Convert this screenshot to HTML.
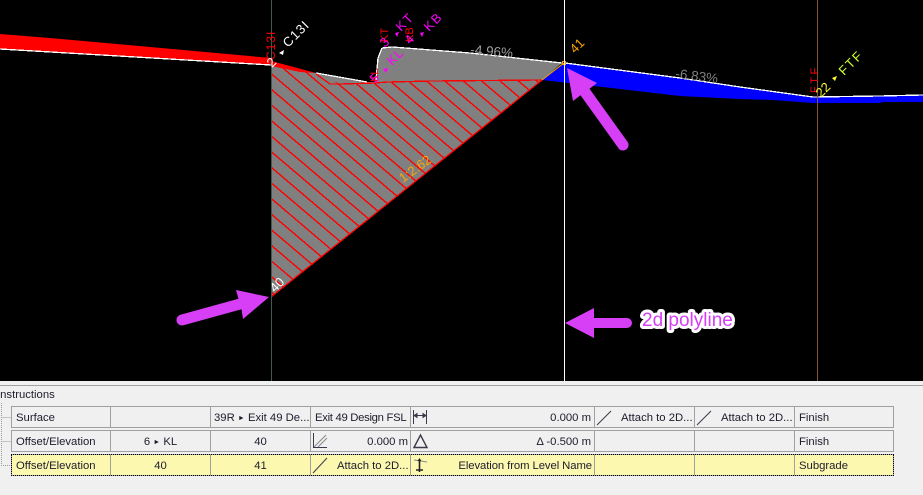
<!DOCTYPE html>
<html>
<head>
<meta charset="utf-8">
<style>
html,body{margin:0;padding:0;background:#000;width:923px;height:495px;overflow:hidden;}
#w{position:relative;width:923px;height:495px;overflow:hidden;background:#000;font-family:"Liberation Sans",sans-serif;}
#cad{position:absolute;left:0;top:0;}
#panel{position:absolute;left:0;top:381px;width:923px;height:114px;background:#f0f0f0;}
#panel .hl{position:absolute;left:0;top:4px;width:923px;height:1px;background:#a0a0a0;}
.t{position:absolute;font-size:11.3px;line-height:14px;color:#1c1c2c;white-space:nowrap;}
.c{position:absolute;box-sizing:border-box;border:1px solid #a0a0a0;height:22px;}
.y{background:#fdf8b0;}
.sel{position:absolute;left:11px;top:454px;width:883px;height:22px;box-sizing:border-box;border:1px dotted #000;}
.r{text-align:right;}
.m{text-align:center;}
.a{font-size:7px;vertical-align:1px;}
</style>
</head>
<body>
<div id="w">
<svg id="cad" width="923" height="381" viewBox="0 0 923 381">
  <defs>
    <clipPath id="hc"><polygon points="271,65 316,73 340,84 375,83 388,82 432,81 542,80 271,297"/></clipPath>
  </defs>
  <polygon points="0,34 50,38 150,47 271,58 271,65 0,49" fill="#ff0000"/>
  <polygon points="271,65 316,73 367,82 375,82 378,58 382,48 392,47 470,53 562,63 542,80 271,297" fill="#808080"/>
  <polygon points="271,61 290,66 316,73 300,72 271,66" fill="#ff0000"/>
  <polygon points="565,63 680,78 740,87 813,97 880,96 923,95 923,102 883,102 880,103 813,103 773,100 740,99 680,96 542,80" fill="#0000ff"/>
  <g shape-rendering="crispEdges" fill="none" stroke="#fff" stroke-width="1.3">
    <path d="M0 49 L271 65"/>
    <path d="M316 73 L367 82 M382 48 L378 58 L376 80 M382 48 L392 47 L470 53 L562 63"/>
    <path d="M565 63 L680 78 L740 87 L813 97 L880 96 L923 95"/>
  </g>
  <g clip-path="url(#hc)" stroke="#ff0000" stroke-width="1.4" fill="none" shape-rendering="crispEdges">
    <path d="M271 73.5l200 170M271 89.1l200 170M271 104.7l200 170M271 120.3l120 102M271 135.9l120 102M271 151.5l120 102M271 167.1l120 102M271 182.7l120 102M271 198.3l120 102M271 213.9l120 102M271 229.5l120 102M271 245.1l120 102M271 260.7l120 102M271 276.3l120 102M271 291.9l120 102M271 57.9l300 255M271 42.3l300 255M271 26.7l300 255M271 11.1l300 255M271 -4.5l300 255M271 -20.1l300 255M271 -35.7l300 255M271 -51.3l300 255M271 -66.9l300 255M271 -82.5l300 255M271 -98.1l300 255M271 -113.7l300 255M271 -129.3l300 255M271 -144.9l300 255M271 -160.5l300 255M271 -176.1l300 255M271 -191.7l300 255M271 -207.3l300 255"/>
  </g>
  <path d="M316 74 L330 84 L340 84 L375 83 L388 82 L432 81 L542 80 L271 297" stroke="#ff0000" stroke-width="1.3" fill="none" shape-rendering="crispEdges"/>
  <path d="M542 80 L564 63" stroke="#ffa500" stroke-width="1" fill="none"/>
  <rect x="562.5" y="61.5" width="3" height="3" fill="none" stroke="#ffa500"/>
  <rect x="271" y="0" width="1" height="381" fill="#3f5a50"/>
  <rect x="564" y="0" width="1" height="381" fill="#ffffff"/>
  <rect x="817" y="0" width="1" height="381" fill="#80552f"/>

  <g font-family="'Liberation Sans',sans-serif" font-size="13">
    <text transform="translate(275,60) rotate(-90)" fill="#ff0000" font-size="12" letter-spacing="1">C13I</text>
    <text transform="translate(272,68) rotate(-45)" fill="#fff">2</text>
    <text transform="translate(288,48) rotate(-45)" fill="#fff" letter-spacing="1">C13I</text>
    <polygon points="279,53 284,50 283,55" fill="#fff"/>
    <text transform="translate(388,42) rotate(-90)" fill="#ff0000" font-size="11">KT</text>
    <text transform="translate(385,48) rotate(-45)" fill="#ff00ff">3</text>
    <polygon points="395,33 399,32 397,37" fill="#ff00ff"/>
    <text transform="translate(401,32) rotate(-45)" fill="#ff00ff" letter-spacing="1.5">KT</text>
    <text transform="translate(413,42) rotate(-90)" fill="#ff0000" font-size="11">KB</text>
    <text transform="translate(410,45) rotate(-45)" fill="#ff00ff">4</text>
    <polygon points="420,33 424,32 422,37" fill="#ff00ff"/>
    <text transform="translate(429,32) rotate(-45)" fill="#ff00ff" letter-spacing="1.5">KB</text>
    <text transform="translate(378,82) rotate(-90)" fill="#ff0000" font-size="11">KL</text>
    <text transform="translate(375,84) rotate(-45)" fill="#ff00ff">5</text>
    <polygon points="383,69 388,68 386,73" fill="#ff00ff"/>
    <text transform="translate(392,66) rotate(-45)" fill="#ff00ff" letter-spacing="1">KL</text>
    <text transform="translate(470,54) rotate(5)" fill="#a0a0a0" font-size="13.5">-4.96%</text>
    <text transform="translate(675,78) rotate(7)" fill="#808080" font-size="13.5">-6.83%</text>
    <text transform="translate(575,54) rotate(-45)" fill="#ffa500">41</text>
    <text transform="translate(275,293) rotate(-45)" fill="#fff">40</text>
    <text transform="translate(403,183) rotate(-36)" fill="#ffa500">1:2.62</text>
    <text transform="translate(818,93) rotate(-90)" fill="#ff0000" font-size="11" letter-spacing="2.5">FTF</text>
    <text transform="translate(821,98) rotate(-45)" fill="#ffff33">22</text>
    <polygon points="832,78 837,76 835,81" fill="#ffff33"/>
    <text transform="translate(844,76) rotate(-45)" fill="#ccff33" letter-spacing="1.5">FTF</text>
  </g>

  <g fill="#d63ff5" stroke="none">
    <path d="M567 68 L597 83 L589.5 88.8 L627.5 141.8 A5.5 5.5 0 0 1 618.5 148.2 L580.5 95.2 L573 101 Z"/>
    <path d="M269 297 L243 319 L241.5 309.3 L183.5 325.3 A5.5 5.5 0 0 1 180.5 314.7 L238.5 298.7 L236 290 Z"/>
    <path d="M565 323 L594 308 L594 318 L627 318 A5 5 0 0 1 627 328 L594 328 L594 338 Z"/>
  </g>
  <text x="642" y="326" font-family="'Liberation Sans',sans-serif" font-size="19" fill="#d63ff5" stroke="#fff" stroke-width="6" stroke-linejoin="round" paint-order="stroke">2d polyline</text>
</svg>

<div id="panel"><div class="hl"></div></div>
<div class="t" style="left:-3px;top:388px;">Instructions</div>

<svg style="position:absolute;left:0;top:400px" width="12" height="70">
  <path d="M1.5 3V65.5H11M1.5 17.5H11M1.5 41.5H11" stroke="#999" stroke-dasharray="1 1" fill="none"/>
</svg>

<!-- row 1 -->
<div class="c" style="left:11px;top:406px;width:100px"></div>
<div class="c" style="left:110px;top:406px;width:101px"></div>
<div class="c" style="left:210px;top:406px;width:101px"></div>
<div class="c" style="left:310px;top:406px;width:101px"></div>
<div class="c" style="left:410px;top:406px;width:185px"></div>
<div class="c" style="left:594px;top:406px;width:101px"></div>
<div class="c" style="left:694px;top:406px;width:101px"></div>
<div class="c" style="left:794px;top:406px;width:100px"></div>
<!-- row 2 -->
<div class="c" style="left:11px;top:430px;width:100px"></div>
<div class="c" style="left:110px;top:430px;width:101px"></div>
<div class="c" style="left:210px;top:430px;width:101px"></div>
<div class="c" style="left:310px;top:430px;width:101px"></div>
<div class="c" style="left:410px;top:430px;width:185px"></div>
<div class="c" style="left:594px;top:430px;width:101px"></div>
<div class="c" style="left:694px;top:430px;width:101px"></div>
<div class="c" style="left:794px;top:430px;width:100px"></div>
<!-- row 3 -->
<div class="c y" style="left:11px;top:454px;width:100px"></div>
<div class="c y" style="left:110px;top:454px;width:101px"></div>
<div class="c y" style="left:210px;top:454px;width:101px"></div>
<div class="c y" style="left:310px;top:454px;width:101px"></div>
<div class="c y" style="left:410px;top:454px;width:185px"></div>
<div class="c y" style="left:594px;top:454px;width:101px"></div>
<div class="c y" style="left:694px;top:454px;width:101px"></div>
<div class="c y" style="left:794px;top:454px;width:100px"></div>
<div class="sel"></div>

<div class="t" style="left:16px;top:411px">Surface</div>
<div class="t" style="left:214px;top:411px">39R <span class="a">►</span> Exit 49 De...</div>
<div class="t" style="left:315px;top:411px;letter-spacing:-.3px">Exit 49 Design FSL</div>
<div class="t r" style="left:500px;top:411px;width:91px">0.000 m</div>
<div class="t" style="left:621px;top:411px">Attach to 2D...</div>
<div class="t" style="left:721px;top:411px">Attach to 2D...</div>
<div class="t" style="left:799px;top:411px">Finish</div>

<div class="t" style="left:16px;top:435px">Offset/Elevation</div>
<div class="t m" style="left:111px;top:435px;width:99px">6 <span class="a">►</span> KL</div>
<div class="t m" style="left:211px;top:435px;width:99px">40</div>
<div class="t r" style="left:340px;top:435px;width:68px">0.000 m</div>
<div class="t r" style="left:500px;top:435px;width:91px">Δ -0.500 m</div>
<div class="t" style="left:799px;top:435px">Finish</div>

<div class="t" style="left:16px;top:459px">Offset/Elevation</div>
<div class="t m" style="left:111px;top:459px;width:99px">40</div>
<div class="t m" style="left:211px;top:459px;width:99px">41</div>
<div class="t" style="left:337px;top:459px">Attach to 2D...</div>
<div class="t r" style="left:430px;top:459px;width:162px;letter-spacing:-.08px">Elevation from Level Name</div>
<div class="t" style="left:799px;top:459px">Subgrade</div>

<svg style="position:absolute;left:0;top:400px" width="923" height="80">
  <g fill="none" stroke="#3a3a4a" stroke-width="1">
    <path d="M413.5 10V24M426.5 10V24M415 15.5H425"/>
    <path d="M414 15.5l3-2v4zM426 15.5l-3-2v4z" fill="#3a3a4a"/>
    <path d="M314 47L326 35M318 47L327 38" stroke="#888"/>
    <path d="M313.5 33V47.5H327" stroke="#3a3a4a"/>
    <path d="M414 47.5L420.5 35L427 47.5Z" stroke-width="1.4"/>
    <path d="M313 73L327 58"/>
    <path d="M597 25L611 11M697 25L711 11"/>
    <path d="M414 60L427 62" stroke="#888"/>
    <path d="M419.5 60V72M416 70H423" stroke="#222" stroke-width="1.6"/>
    <path d="M419.5 58l-2 3h4z" fill="#222" stroke="none"/>
  </g>
</svg>
</div>
</body>
</html>
